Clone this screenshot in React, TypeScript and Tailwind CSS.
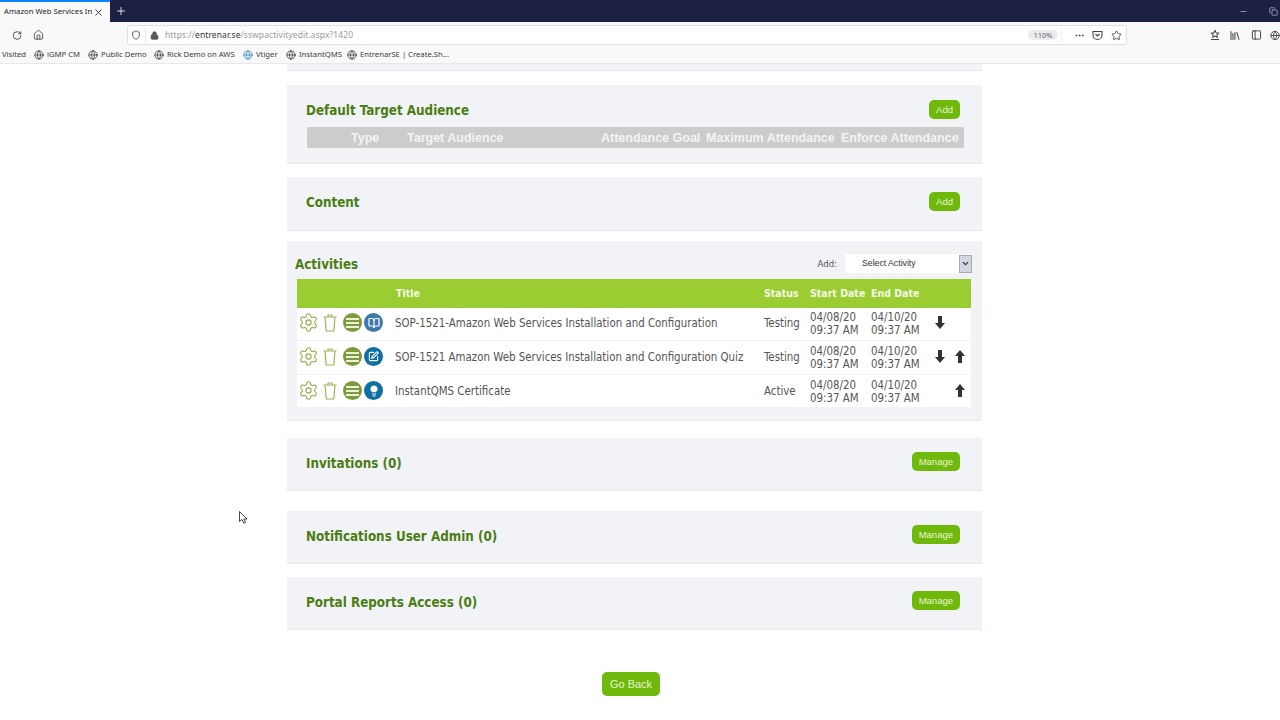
import { Home, Library, Lock, MoreHorizontal, Minus, Plus, RotateCw, Settings, Shield, Star, X, Globe, ChevronDown, BookOpen, SquarePen, Lightbulb, PanelLeft, Copy } from "lucide-react";
import type { ReactNode } from "react";

const bookmarks = [
  { label: "iGMP CM", width: "w-[54px]", color: "text-[#444]" },
  { label: "Public Demo", width: "w-[66px]", color: "text-[#444]" },
  { label: "Rick Demo on AWS", width: "w-[89px]", color: "text-[#444]" },
  { label: "Vtiger", width: "w-[43px]", color: "text-[#3a8ec0]" },
  { label: "InstantQMS", width: "w-[61px]", color: "text-[#444]" },
  { label: "EntrenarSE | Create.Sh...", width: "", color: "text-[#444]" },
];

const activities = [
  { title: "SOP-1521-Amazon Web Services Installation and Configuration", status: "Testing", icon: "book", down: true, up: false, row: "h-[33px] pb-[3px] border-b" },
  { title: "SOP-1521 Amazon Web Services Installation and Configuration Quiz", status: "Testing", icon: "edit", down: true, up: true, row: "h-[34px] pb-[2px] border-b" },
  { title: "InstantQMS Certificate", status: "Active", icon: "bulb", down: false, up: true, row: "h-[32px] pb-[1px]" },
];

function GreenButton({ children }: { children: ReactNode }) {
  return (
    <button className="h-[19px] px-[7px] rounded-[5px] bg-[#6fb80c] text-[#e8f6d0] text-[9.5px] leading-[19px] font-['Liberation_Sans',sans-serif]">
      {children}
    </button>
  );
}

function Panel({ title, action, className, buttonTop }: { title: string; action: string; className: string; buttonTop: string }) {
  return (
    <div className={`w-[695px] bg-[#f2f3f6] border-b border-[#e9eaed] flex items-start justify-between pl-[19px] pr-[22px] ${className}`}>
      <h2 className="text-[13.3px] leading-[20px] mt-[16px] font-bold text-[#4a7d14]">{title}</h2>
      <div className={`flex ${buttonTop}`}>
        <GreenButton>{action}</GreenButton>
      </div>
    </div>
  );
}

function Arrow({ up }: { up?: boolean }) {
  return (
    <svg width="10" height="13" viewBox="0 0 10 13" className={up ? "" : "rotate-180"}>
      <path d="M5 0 L10 6 H7 V13 H3 V6 H0 Z" fill="#333" />
    </svg>
  );
}

function Trash() {
  return (
    <svg width="14" height="18" viewBox="0 0 14 18" fill="none" stroke="#9cb455" strokeWidth="1.2">
      <path d="M0.5 3 H13.5 M5 3 V1 H9 V3 M2 3 L3.2 17 H10.8 L12 3" />
    </svg>
  );
}

function RowIcons({ icon }: { icon: string }) {
  return (
    <div className="flex items-center w-[98px] pl-[1px]">
      <Settings size={21} strokeWidth={1.2} className="text-[#8fa944]" />
      <span className="ml-[4px] flex"><Trash /></span>
      <span className="ml-[6px] w-[19px] h-[19px] rounded-full bg-[#7f9a3a] flex flex-col items-center justify-center gap-[2px]">
        <span className="w-[13px] h-[2px] bg-[#eef2dc]" />
        <span className="w-[13px] h-[2px] bg-[#eef2dc]" />
        <span className="w-[13px] h-[2px] bg-[#eef2dc]" />
      </span>
      <span className={`ml-[2px] w-[19px] h-[19px] rounded-full flex items-center justify-center text-white ${icon === "book" ? "bg-[#3f78ab]" : "bg-[#0f6ea3]"}`}>
        {icon === "book" && <BookOpen size={12} strokeWidth={2.4} />}
        {icon === "edit" && <SquarePen size={11} strokeWidth={2.4} />}
        {icon === "bulb" && <Lightbulb size={12} strokeWidth={2.4} fill="white" />}
      </span>
    </div>
  );
}

export default function App() {
  return (
    <div className="relative w-[1280px] h-[720px] overflow-hidden bg-white font-['DejaVu_Sans_Condensed','DejaVu_Sans',sans-serif]">
      {/* browser chrome */}
      <div className="h-[22px] bg-[#1c2143] flex items-center font-['Noto_Sans',sans-serif]">
        <div className="w-[110px] h-full bg-[#f9f9fa] border-t-2 border-[#0a84ff] flex items-center pl-[4px] pr-[6px] text-[7.7px] text-[#222]">
          <span className="whitespace-nowrap">Amazon Web Services In</span>
          <X size={11} className="ml-auto text-[#333]" />
        </div>
        <Plus size={12} className="ml-[5px] text-[#d8dbe6]" />
        <div className="ml-auto flex items-center gap-[21px] text-[#aab0c8]">
          <Minus size={9} />
          <Copy size={9} className="mr-[2px]" />
        </div>
      </div>
      <div className="h-[24px] pt-[2px] bg-[#f9f9fa] flex items-center text-[#3a3a3c] font-['Noto_Sans',sans-serif]">
        <RotateCw size={11} strokeWidth={2} className="ml-[12px]" />
        <Home size={12} strokeWidth={1.8} className="ml-[11px]" />
        <div className="ml-[83px] w-[1000px] h-[20px] bg-white border border-[#e0e0e2] rounded-[2px] flex items-center text-[8.5px] shrink-0">
          <Shield size={10} className="ml-[3px]" />
          <span className="ml-[4px] h-[14px] border-l border-[#e5e5e5]" />
          <Lock size={9} fill="#555" className="ml-[4px] text-[#555]" />
          <span className="ml-[6px] text-[#9a9a9e] tracking-[0.01em]">https://<span className="text-[#333]">entrenar.se</span>/sswpactivityedit.aspx?1420</span>
          <span className="ml-auto h-[10px] w-[30px] rounded-full bg-[#ececee] text-[7.5px] leading-[10px] text-center text-[#666]">110%</span>
          <span className="ml-[3px] h-[14px] border-l border-[#eee]" />
          <MoreHorizontal size={11} className="ml-[12px]" />
          <svg width="11" height="11" viewBox="0 0 11 11" fill="none" stroke="#444" strokeWidth="1.1" className="ml-[7px]">
            <path d="M1 1.5 H10 V5 A4.5 4.5 0 0 1 1 5 Z M3.5 4 L5.5 6 L7.5 4" />
          </svg>
          <Star size={11} strokeWidth={1.8} className="ml-[8px] mr-[4px]" />
        </div>
        <svg width="11" height="12" viewBox="0 0 11 12" fill="none" stroke="#444" strokeWidth="1.1" className="ml-[83px]">
          <path d="M5.5 1 L6.7 3.6 L9.5 4 L7.5 6 L8 8.5 L5.5 7.2 L3 8.5 L3.5 6 L1.5 4 L4.3 3.6 Z M1 11 H10" />
        </svg>
        <Library size={13} className="ml-[9px]" />
        <PanelLeft size={12} className="ml-[10px]" />
        <Globe size={11} className="ml-[8px]" />
      </div>
      <div className="h-[18px] pt-[1px] bg-[#f9f9fa] border-b border-[#e8e8ea] flex items-center pl-[2px] text-[7.7px] text-[#3c3c40] font-['Noto_Sans',sans-serif] whitespace-nowrap">
        <span className="w-[32px]">Visited</span>
        {bookmarks.map((b) => (
          <span key={b.label} className={`flex items-center gap-[3px] ${b.width}`}>
            <Globe size={10} className={b.color} />
            {b.label}
          </span>
        ))}
      </div>

      {/* page */}
      <div className="pl-[287px] flex flex-col items-start">
        <div className="w-[695px] h-[7px] bg-[#f2f3f6] border-b border-[#e9eaed]" />

        <div className="w-[695px] h-[79px] mt-[14px] bg-[#f2f3f6] border-b border-[#e9eaed] pl-[19px] pr-[22px]">
          <div className="flex items-start justify-between h-[42px]">
            <h2 className="text-[13.3px] leading-[20px] mt-[16px] font-bold text-[#4a7d14]">Default Target Audience</h2>
            <div className="flex mt-[15px]"><GreenButton>Add</GreenButton></div>
          </div>
          <div className="w-[657px] ml-[1px] h-[21px] pt-[1px] bg-[#cccccc] rounded-[2px] flex items-center text-[#f4f4f4] text-[12.5px] font-bold font-['Liberation_Sans',sans-serif] whitespace-nowrap">
            <span className="ml-[44px] w-[56px]">Type</span>
            <span className="w-[194px]">Target Audience</span>
            <span className="w-[105px]">Attendance Goal</span>
            <span className="w-[135px]">Maximum Attendance</span>
            <span>Enforce Attendance</span>
          </div>
        </div>

        <Panel title="Content" action="Add" className="h-[54px] mt-[13px]" buttonTop="mt-[15px]" />

        {/* activities */}
        <div className="w-[695px] h-[180px] mt-[10px] bg-[#f2f3f6] border-b border-[#e9eaed] pl-[8px]">
          <div className="h-[38px] flex items-start">
            <h2 className="text-[13.3px] leading-[20px] mt-[14px] font-bold text-[#4a7d14]">Activities</h2>
            <span className="ml-auto mt-[16px] text-[9.5px] text-[#555]">Add:</span>
            <div className="ml-[8px] mt-[13px] mr-[10px] w-[127px] h-[19px] bg-white flex items-center text-[8.7px] text-[#333] font-['Liberation_Sans',sans-serif]">
              <span className="ml-[17px]">Select Activity</span>
              <span className="ml-auto w-[13px] h-[18px] bg-[#d4d6e2] border border-[#aaa] flex items-center justify-center">
                <ChevronDown size={9} strokeWidth={3.5} className="text-[#334]" />
              </span>
            </div>
          </div>
          <div className="w-[674px] ml-[2px]">
            <div className="h-[29px] bg-[#9acd32] flex items-center text-[#f6fbe6] text-[10.5px] font-bold whitespace-nowrap">
              <span className="ml-[99px] w-[368px]">Title</span>
              <span className="w-[46px]">Status</span>
              <span className="w-[61px]">Start Date</span>
              <span>End Date</span>
            </div>
            {activities.map((a) => (
              <div key={a.title} className={`bg-white border-[#f2f2f4] flex items-center text-[11.4px] text-[#555] whitespace-nowrap ${a.row}`}>
                <RowIcons icon={a.icon} />
                <span className="w-[369px] pt-[2px]">{a.title}</span>
                <span className="w-[46px] pt-[2px]">{a.status}</span>
                <span className="w-[61px] pt-[2px] leading-[13px]">04/08/20<br />09:37 AM</span>
                <span className="w-[58px] pt-[2px] leading-[13px]">04/10/20<br />09:37 AM</span>
                <span className="w-[21px] flex justify-center">{a.down && <Arrow />}</span>
                <span className="w-[20px] flex justify-center">{a.up && <Arrow up />}</span>
              </div>
            ))}
          </div>
        </div>

        <Panel title="Invitations (0)" action="Manage" className="h-[53px] mt-[17px]" buttonTop="mt-[14px]" />
        <Panel title="Notifications User Admin (0)" action="Manage" className="h-[53px] mt-[20px]" buttonTop="mt-[14px]" />
        <Panel title="Portal Reports Access (0)" action="Manage" className="h-[53px] mt-[13px]" buttonTop="mt-[14px]" />

        <button className="ml-[315px] mt-[42px] h-[24px] w-[58px] rounded-[5px] bg-[#6fb80c] text-[#e8f6d0] text-[11px] font-['Liberation_Sans',sans-serif]">
          Go Back
        </button>
      </div>

      {/* mouse pointer */}
      <svg width="9" height="13" viewBox="0 0 9 13" className="absolute left-[239px] top-[511px]">
        <path d="M0.5 0.5 V10.5 L3 8.5 L4.8 12.2 L6.6 11.4 L4.9 8 H8 Z" fill="white" stroke="#333" strokeWidth="0.9" />
      </svg>
    </div>
  );
}
